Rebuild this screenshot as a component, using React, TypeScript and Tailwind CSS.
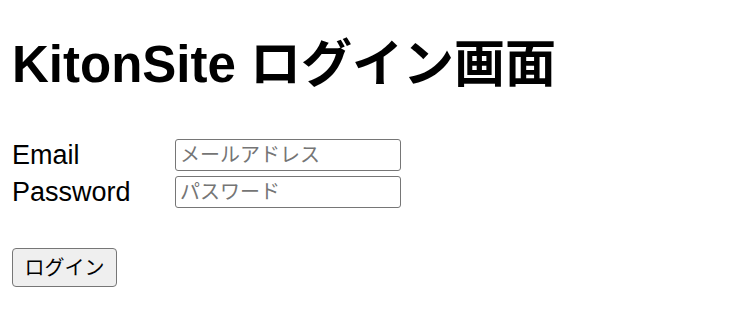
import React from 'react';

const font = { fontFamily: '"Liberation Sans", "Noto Sans CJK JP", sans-serif' };

export default function App() {
  return (
    <div className="min-h-[316px] bg-white px-[12px] text-black" style={font}>
      <h1 className="pt-[35px] pb-[44px] text-[51px] font-bold leading-[60px]">KitonSite ログイン画面</h1>
      <form className="flex flex-col" onSubmit={(e) => e.preventDefault()}>
        <div className="flex flex-col gap-[5px]">
          <div className="flex items-center">
            <label className="w-[163px] text-[27px] leading-[32px]">Email</label>
            <input
              type="email"
              placeholder="メールアドレス"
              className="h-[32px] w-[226px] rounded-[3px] border-[1.5px] border-[#767676] px-[4px] text-[20px] placeholder:text-[#757575]"
            />
          </div>
          <div className="flex items-center">
            <label className="w-[163px] text-[27px] leading-[32px]">Password</label>
            <input
              type="password"
              placeholder="パスワード"
              className="h-[32px] w-[226px] rounded-[3px] border-[1.5px] border-[#767676] px-[4px] text-[20px] placeholder:text-[#757575]"
            />
          </div>
        </div>
        <div className="pt-[40px]">
          <button
            type="submit"
            className="h-[39px] w-[105px] rounded-[4px] border-[1.5px] border-[#767676] bg-[#efefef] text-[20px]"
          >
            ログイン
          </button>
        </div>
      </form>
    </div>
  );
}
